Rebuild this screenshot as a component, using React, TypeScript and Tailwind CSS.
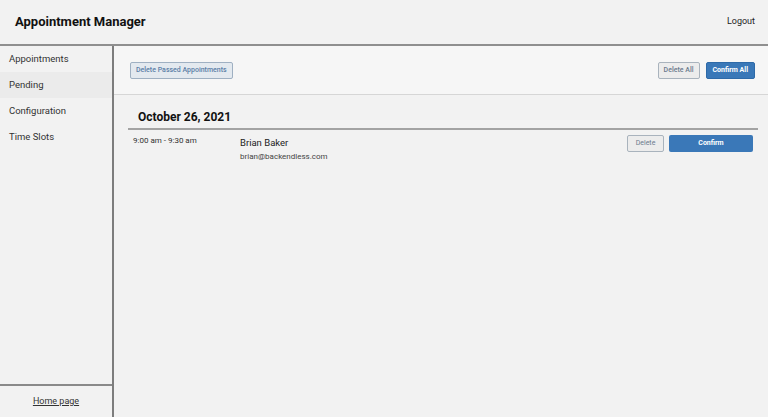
import React from 'react'

const navItems = ['Appointments', 'Pending', 'Configuration', 'Time Slots']

export default function App() {
  const active = 'Pending'

  return <div className="h-[417px] w-[768px] flex flex-col bg-[#f2f2f2] text-[#222] overflow-hidden" style={{ fontFamily: 'Roboto, "Liberation Sans", sans-serif' }}>
    <header className="h-[46px] shrink-0 flex items-center justify-between px-[15px] border-b-2 border-[#8f8f8f]">
      <h1 className="text-[13px] font-bold text-[#111]">Appointment Manager</h1>
      <button className="text-[9px] text-[#222] mr-[-2px]">Logout</button>
    </header>

    <div className="flex flex-1 min-h-0">
      <aside className="w-[114px] shrink-0 flex flex-col border-r-2 border-[#7d7d7d] bg-[#f2f2f2]">
        <nav className="flex-1 flex flex-col">
          {navItems.map(item => (
            <a key={item} className={`h-[26px] flex items-center pl-[9px] text-[9.5px] text-[#333] ${item === active ? 'bg-[#ebebeb]' : ''}`}>
              {item}
            </a>
          ))}
        </nav>
        <div className="h-[33px] border-t-2 border-[#8a8a8a] flex items-center justify-center">
          <a className="text-[9px] text-[#333] underline">Home page</a>
        </div>
      </aside>

      <main className="flex-1 flex flex-col min-w-0">
        <div className="h-[49px] flex items-center justify-between pl-[16px] pr-[13px] bg-[#f6f6f6] border-b border-[#d6d6d6]">
          <button className="h-[17px] px-[5px] text-[7px] font-medium text-[#5b7ea6] bg-[#e3e9ef] border border-[#9fb0c2] rounded-[2px]">
            Delete Passed Appointments
          </button>
          <div className="flex gap-[6px]">
            <button className="h-[17px] px-[5px] text-[7px] font-medium text-[#6b7a8c] bg-[#ececec] border border-[#a9b3bd] rounded-[2px]">Delete All</button>
            <button className="h-[17px] px-[6px] text-[7px] font-bold text-white bg-[#3a78b8] border border-[#2e6aa8] rounded-[2px]">Confirm All</button>
          </div>
        </div>

        <section className="pl-[14px] pr-[10px] pt-[13px]">
          <h2 className="text-[12px] font-bold text-[#111] pl-[10px] pb-[2px] border-b-2 border-[#a3a3a3]">October 26, 2021</h2>
          <div className="flex items-start pt-[5px]">
            <div className="w-[112px] pl-[5px] text-[8px] text-[#333] pt-[1px] leading-[10px]">9:00 am - 9:30 am</div>
            <div className="flex-1 flex flex-col">
              <span className="text-[9.5px] text-[#222] leading-[13px] pt-[1px]">Brian Baker</span>
              <span className="text-[8px] text-[#444] leading-[12px] pt-[2px]">brian@backendless.com</span>
            </div>
            <div className="flex gap-[5px] pr-[5px]">
              <button className="h-[17px] w-[37px] text-[7px] text-[#6b7a8c] bg-[#ececec] border border-[#a9b3bd] rounded-[2px]">Delete</button>
              <button className="h-[17px] w-[84px] text-[7px] font-bold text-white bg-[#3a78b8] rounded-[2px]">Confirm</button>
            </div>
          </div>
        </section>
      </main>
    </div>
  </div>
}
